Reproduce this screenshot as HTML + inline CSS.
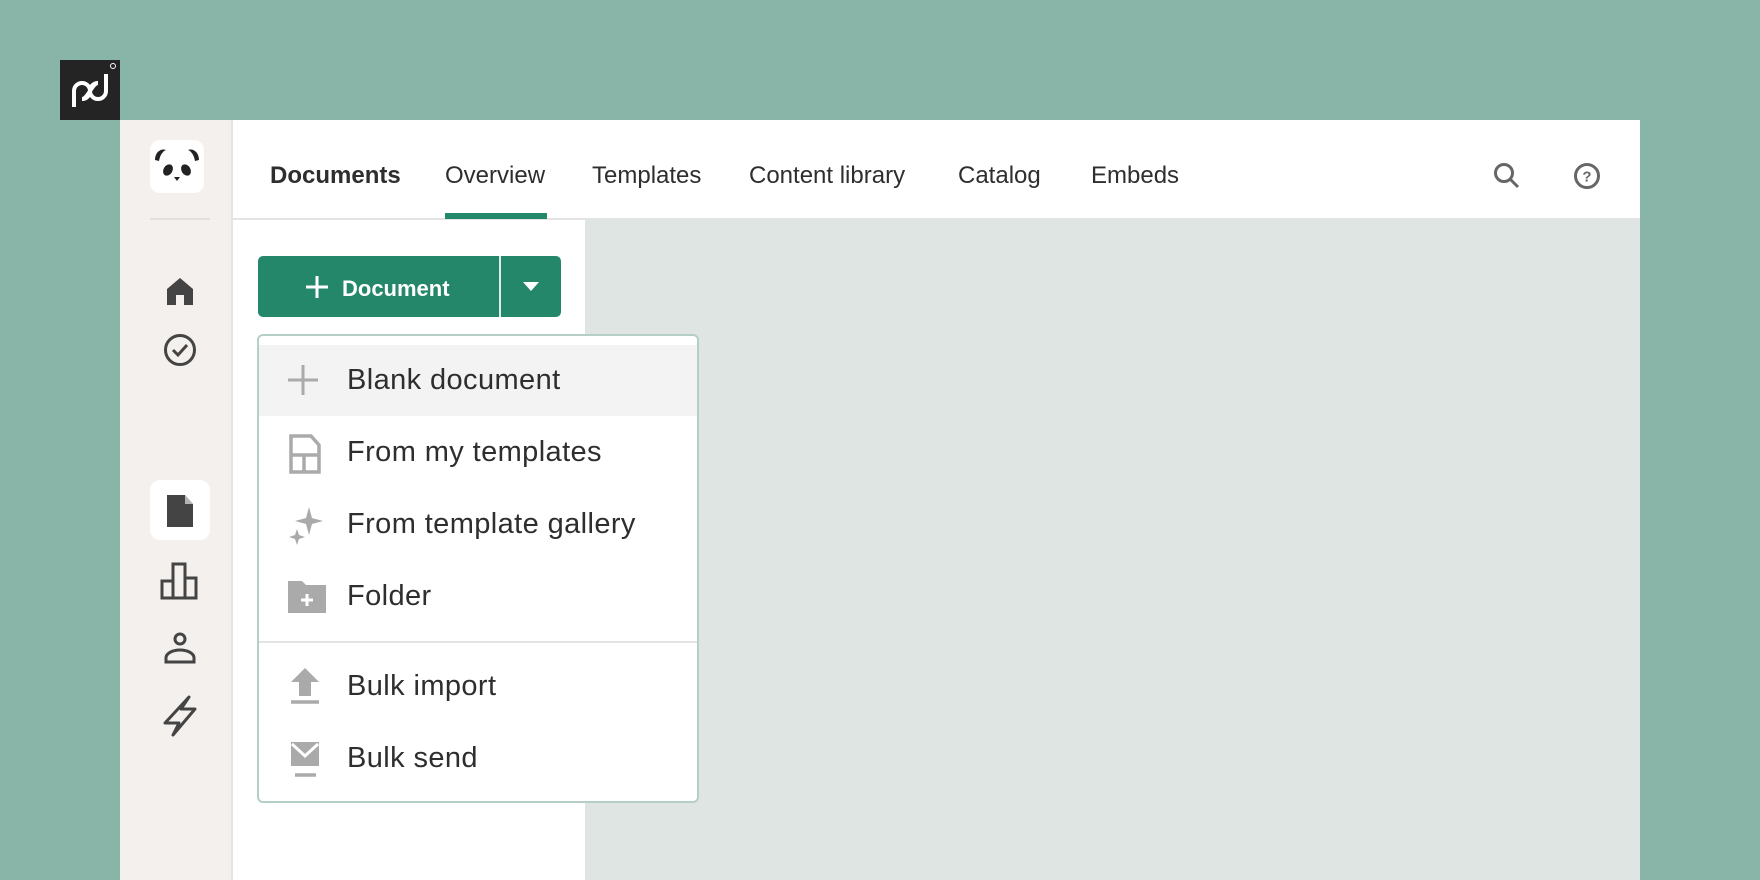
<!DOCTYPE html>
<html><head><meta charset="utf-8"><style>
*{margin:0;padding:0;box-sizing:border-box}
body{width:1760px;height:880px;background:#88b5a8;position:relative;overflow:hidden;font-family:"Liberation Sans",sans-serif;color:#2e2e2e}
.abs{position:absolute}
.logo{left:60px;top:60px;width:60px;height:60px;background:#242424}
.panel{left:120px;top:120px;width:1520px;height:760px;background:#fff}
.side{left:120px;top:120px;width:113px;height:760px;background:#f3f0ed;border-right:2px solid #e6e3e0}
.hdr{left:233px;top:218px;width:1407px;height:2px;background:#e4e4e4}
.gray{left:585px;top:220px;width:1055px;height:660px;background:#dfe5e2}
.tab{top:162px;font-size:24px;color:#2e2e2e;white-space:nowrap}
.btn{left:258px;top:256px;width:303px;height:61px;background:#24876a;border-radius:5px;color:#fff}
.dd{left:257px;top:334px;width:442px;height:469px;border:2px solid #b6cfc6;border-radius:6px;background:#fff}
.item{position:absolute;left:0;width:438px;height:71px;font-size:29px;letter-spacing:0.4px;color:#2e2e2e}
.item span{position:absolute;left:88px;top:19px;white-space:nowrap}
.item svg{position:absolute;left:28px;top:16px}
</style></head><body>
<div class="abs logo"><svg width="60" height="60" viewBox="0 0 60 60"><path d="M14 47V31a8 8 0 1 1 8 8h-0M46 14v17a8 8 0 1 1-8-8" fill="none" stroke="#fff" stroke-width="4"/><path d="M22 39c6 0 10-16 16-16" fill="none" stroke="#fff" stroke-width="4"/><circle cx="53" cy="6" r="2.5" fill="none" stroke="#fff" stroke-width="1"/></svg></div>
<div class="abs panel"></div>
<div class="abs side"></div>
<div class="abs hdr"></div>
<div class="abs gray"></div>
<div class="abs" style="left:150px;top:140px;width:54px;height:53px;background:#fff;border-radius:10px">
<svg width="54" height="53" viewBox="0 0 54 53"><path d="M5 20c0-8 6-12 11-10-3 1-6 5-7 11z" fill="#222"/><path d="M49 20c0-8-6-12-11-10 3 1 6 5 7 11z" fill="#222"/><ellipse cx="18" cy="30" rx="4.5" ry="6" fill="#222" transform="rotate(30 18 30)"/><ellipse cx="36" cy="30" rx="4.5" ry="6" fill="#222" transform="rotate(-30 36 30)"/><path d="M24 37h6l-3 4z" fill="#222"/></svg></div>
<div class="abs" style="left:150px;top:218px;width:60px;height:2px;background:#e2dfdc"></div>
<svg class="abs" style="left:164px;top:275px" width="32" height="32" viewBox="0 0 32 32"><path d="M3 14L16 3l13 11v16h-9V20h-8v10H3z" fill="#444"/></svg>
<svg class="abs" style="left:163px;top:333px" width="34" height="34" viewBox="0 0 34 34"><circle cx="17" cy="17" r="14.5" fill="none" stroke="#444" stroke-width="3"/><path d="M10 17l5 5 9-10" fill="none" stroke="#444" stroke-width="3"/></svg>
<div class="abs" style="left:150px;top:480px;width:60px;height:60px;background:#fff;border-radius:10px"></div>
<svg class="abs" style="left:164px;top:494px" width="32" height="34" viewBox="0 0 32 34"><path d="M3 1h18l8 9v23H3z" fill="#444"/><path d="M21 1v9h8" fill="#fff" opacity=".6"/></svg>
<svg class="abs" style="left:160px;top:561px" width="40" height="40" viewBox="0 0 40 40"><path d="M2 37V20h11V3h12v14h11v20zM13 20v17M25 17v20" fill="none" stroke="#444" stroke-width="3"/></svg>
<svg class="abs" style="left:163px;top:632px" width="34" height="32" viewBox="0 0 34 32"><circle cx="17" cy="7" r="5" fill="none" stroke="#444" stroke-width="3"/><path d="M3 30v-4c0-5 7-8 14-8s14 3 14 8v4z" fill="none" stroke="#444" stroke-width="3"/></svg>
<svg class="abs" style="left:162px;top:695px" width="36" height="42" viewBox="0 0 36 42"><path d="M27 2L3 28h14l-6 12 22-26H19z" fill="none" stroke="#444" stroke-width="3" stroke-linejoin="round"/></svg>
<div class="abs tab" style="left:270px;font-weight:bold">Documents</div>
<div class="abs tab" style="left:445px">Overview</div>
<div class="abs" style="left:445px;top:213px;width:102px;height:6px;background:#24876a"></div>
<div class="abs tab" style="left:592px">Templates</div>
<div class="abs tab" style="left:749px">Content library</div>
<div class="abs tab" style="left:958px">Catalog</div>
<div class="abs tab" style="left:1091px">Embeds</div>
<svg class="abs" style="left:1492px;top:161px" width="30" height="30" viewBox="0 0 30 30"><circle cx="12" cy="12" r="8.5" fill="none" stroke="#666" stroke-width="3"/><path d="M18 18l8 8" stroke="#666" stroke-width="3"/></svg>
<svg class="abs" style="left:1572px;top:161px" width="30" height="30" viewBox="0 0 30 30"><circle cx="15" cy="15" r="11.5" fill="none" stroke="#666" stroke-width="3"/><text x="15" y="20.5" font-size="15" font-weight="bold" fill="#666" text-anchor="middle" font-family="Liberation Sans">?</text></svg>
<div class="abs btn"><svg class="abs" style="left:47px;top:19px" width="24" height="24"><path d="M12 1v22M1 12h22" stroke="#fff" stroke-width="3"/></svg><span class="abs" style="left:84px;top:20px;font-size:22px;font-weight:bold">Document</span><div class="abs" style="left:241px;top:0;width:2px;height:61px;background:#fff;opacity:.85"></div><svg class="abs" style="left:265px;top:26px" width="16" height="10"><path d="M0 0h16L8 9z" fill="#fff"/></svg></div>
<div class="abs dd">
<div class="item" style="top:9px;background:#f3f3f3"><svg width="32" height="36"><path d="M16 4v30M1 19h30" stroke="#aaa" stroke-width="3"/></svg><span>Blank document</span></div>
<div class="item" style="top:81px"><svg width="36" height="42"><path d="M4 3h20l8 9v27H4zM4 22h28M17 22v17" fill="none" stroke="#aaa" stroke-width="3.5"/></svg><span>From my templates</span></div>
<div class="item" style="top:153px"><svg width="40" height="42"><path d="M22 2l3 11 11 3-11 3-3 11-3-11-11-3 11-3z M10 24l2 6 6 2-6 2-2 6-2-6-6-2 6-2z" fill="#aaa"/></svg><span>From template gallery</span></div>
<div class="item" style="top:225px"><svg width="42" height="40"><path d="M1 4h14l4 4h20v28H1z" fill="#aaa"/><path d="M20 17v12M14 23h12" stroke="#fff" stroke-width="3"/></svg><span>Folder</span></div>
<div style="position:absolute;left:0;top:305px;width:438px;height:2px;background:#e4e4e4"></div>
<div class="item" style="top:315px"><svg width="36" height="40"><path d="M18 1L4 15h8v14h12V15h8z" fill="#aaa"/><path d="M4 35h28" stroke="#aaa" stroke-width="3.5"/></svg><span>Bulk import</span></div>
<div class="item" style="top:387px"><svg width="36" height="40"><path d="M4 3h28v24H4z" fill="#aaa"/><path d="M5 5l13 12 13-12" fill="none" stroke="#fff" stroke-width="3"/><path d="M8 36h21" stroke="#aaa" stroke-width="3.5"/></svg><span>Bulk send</span></div>
</div>
</body></html>
